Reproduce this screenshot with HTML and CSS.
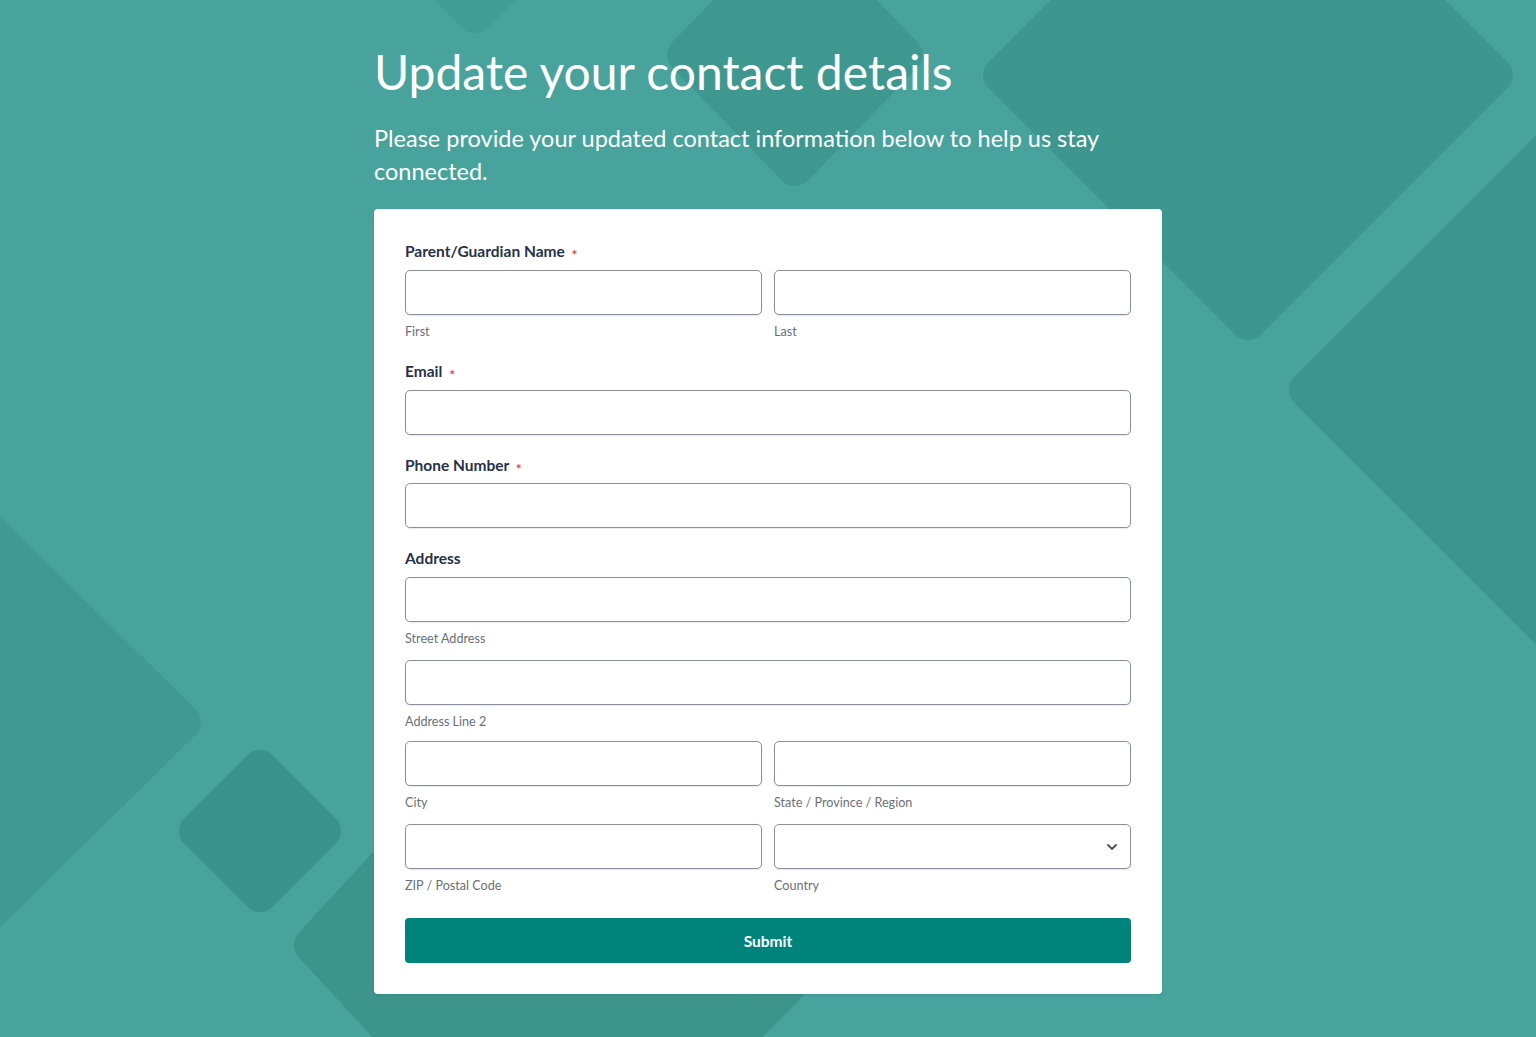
FILE: index.html
```html
<!DOCTYPE html>
<html lang="en">
<head>
<meta charset="utf-8">
<title>Update your contact details</title>
<link rel="stylesheet" href="styles.css">
</head>
<body>
<svg class="bg" viewBox="0 0 1536 1037" preserveAspectRatio="none" aria-hidden="true">
  <g stroke-linejoin="round" stroke-width="36">
    <polygon class="s-a" points="1248,-172 1495,75 1248,322 1001,75"/>
    <polygon class="s-b" points="1570,127 1833,390 1570,653 1307,390"/>
    <polygon class="s-c" points="-10,532 183,722 -10,912 -200,722"/>
    <polygon class="s-d" points="260,768 323,831 260,894 197,831"/>
    <polygon class="s-e" points="560,676 829,945 560,1214 312,945"/>
    <polygon class="s-f" points="795,-58 905,55 795,168 685,55"/>
    <polygon class="s-g" points="475,-105 535,-45 475,15 415,-45"/>
  </g>
</svg>
<main class="page">
  <h1 class="title">Update your contact details</h1>
  <p class="intro">Please provide your updated contact information below to help us stay connected.</p>
  <form class="card">
    <div class="field">
      <div class="label">Parent/Guardian Name <span class="req">*</span></div>
      <div class="row">
        <div class="col">
          <input class="input" type="text">
          <div class="sub">First</div>
        </div>
        <div class="col">
          <input class="input" type="text">
          <div class="sub">Last</div>
        </div>
      </div>
    </div>
    <div class="field plain">
      <div class="label">Email <span class="req">*</span></div>
      <input class="input" type="email">
    </div>
    <div class="field plain">
      <div class="label tight">Phone Number <span class="req">*</span></div>
      <input class="input" type="tel">
    </div>
    <div class="field address">
      <div class="label">Address</div>
      <div class="col">
        <input class="input" type="text">
        <div class="sub">Street Address</div>
      </div>
      <div class="col">
        <input class="input" type="text">
        <div class="sub">Address Line 2</div>
      </div>
      <div class="row">
        <div class="col">
          <input class="input" type="text">
          <div class="sub">City</div>
        </div>
        <div class="col">
          <input class="input" type="text">
          <div class="sub">State / Province / Region</div>
        </div>
      </div>
      <div class="row">
        <div class="col">
          <input class="input" type="text">
          <div class="sub">ZIP / Postal Code</div>
        </div>
        <div class="col">
          <div class="select">
            <svg class="chev" viewBox="0 0 10 6" aria-hidden="true"><path d="M1 1 L5 5 L9 1" fill="none" stroke="#4a5260" stroke-width="1.8" stroke-linecap="round" stroke-linejoin="round"/></svg>
          </div>
          <div class="sub">Country</div>
        </div>
      </div>
    </div>
    <button class="submit" type="button">Submit</button>
  </form>
</main>
</body>
</html>
```

FILE: styles.css
```css
html, body {
  margin: 0;
  padding: 0;
}
body {
  background: #47a39c;
  font-family: Lato, "Open Sans", sans-serif;
  min-height: 1037px;
  position: relative;
  overflow: hidden;
}
.bg {
  position: absolute;
  left: 0;
  top: 0;
  width: 1536px;
  height: 1037px;
  z-index: 0;
}
.s-a { fill: #3e978f; stroke: #3e978f; }
.s-b { fill: #3d958d; stroke: #3d958d; }
.s-c { fill: #409a92; stroke: #409a92; }
.s-d { fill: #3b928a; stroke: #3b928a; }
.s-e { fill: #3c948b; stroke: #3c948b; }
.s-f { fill: #3f988f; stroke: #3f988f; }
.s-g { fill: #409c94; stroke: #409c94; }

.page {
  position: relative;
  z-index: 1;
  width: 788px;
  margin: 0 auto;
  padding-top: 43px;
  padding-bottom: 40px;
}
.title {
  margin: 0;
  font-size: 48px;
  line-height: 58px;
  font-weight: 400;
  color: #ffffff;
}
.intro {
  margin: 21px 0 21px 0;
  font-size: 23.5px;
  line-height: 33px;
  color: #ffffff;
  padding-right: 20px;
}
.card {
  background: #ffffff;
  border-radius: 4px;
  padding: 32px 31px 31px 31px;
  box-shadow: 0 1px 3px rgba(0,0,0,0.08);
  display: flex;
  flex-direction: column;
}
.field {
  display: flex;
  flex-direction: column;
  margin-bottom: 21px;
}
.field.plain {
  margin-bottom: 20px;
}
.label {
  font-size: 15.5px;
  line-height: 20px;
  height: 20px;
  font-weight: 700;
  color: #26324a;
  margin-bottom: 9px;
}
.label.tight {
  margin-bottom: 8px;
}
.req {
  color: #e0473f;
  font-size: 14px;
  line-height: 0;
  margin-left: 3px;
  vertical-align: -3px;
}
.row {
  display: flex;
  gap: 12px;
}
.col {
  flex: 1;
  display: flex;
  flex-direction: column;
}
.input, .select {
  box-sizing: border-box;
  height: 45px;
  width: 100%;
  border: 1px solid #8a909b;
  border-radius: 5px;
  background: #fff;
  margin: 0;
  padding: 0 12px;
  font: inherit;
  box-shadow: 0 1px 1px rgba(60,70,90,0.12);
}
.select {
  display: flex;
  align-items: center;
  justify-content: flex-end;
  padding-right: 13px;
}
.chev {
  width: 10px;
  height: 6px;
}
.sub {
  font-size: 12.6px;
  line-height: 16px;
  color: #6b7078;
  margin-top: 9px;
}
.address .col + .col {
  margin-top: 13px;
}
.address .row {
  margin-top: 11px;
}
.address .row + .row {
  margin-top: 13px;
}
.address .row .col {
  margin-top: 0;
}
.address {
  margin-bottom: 24px;
}
.submit {
  height: 45px;
  border: 0;
  border-radius: 4px;
  background: #00837a;
  color: #ffffff;
  font-family: Lato, "Open Sans", sans-serif;
  font-size: 15.5px;
  font-weight: 700;
  cursor: pointer;
}
```
